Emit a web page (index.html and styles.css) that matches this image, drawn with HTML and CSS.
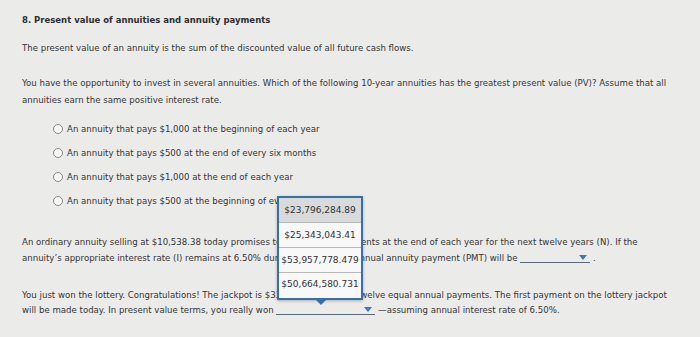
FILE: index.html
```html
<!DOCTYPE html>
<html>
<head>
<meta charset="utf-8">
<link rel="stylesheet" href="styles.css">
</head>
<body>
<div class="page">
  <h2 class="title">8. Present value of annuities and annuity payments</h2>
  <p class="p1">The present value of an annuity is the sum of the discounted value of all future cash flows.</p>
  <p class="p2">You have the opportunity to invest in several annuities. Which of the following 10-year annuities has the greatest present value (PV)? Assume that all annuities earn the same positive interest rate.</p>
  <ul class="options">
    <li class="opt"><span class="radio"></span>An annuity that pays $1,000 at the beginning of each year</li>
    <li class="opt"><span class="radio"></span>An annuity that pays $500 at the end of every six months</li>
    <li class="opt"><span class="radio"></span>An annuity that pays $1,000 at the end of each year</li>
    <li class="opt"><span class="radio"></span>An annuity that pays $500 at the beginning of every six months</li>
  </ul>
  <p class="p3">An ordinary annuity selling at $10,538.38 today promises to make equal payments at the end of each year for the next twelve years (N). If the annuity’s appropriate interest rate (I) remains at 6.50% during this time, the annual annuity payment (PMT) will be <span class="select sel1"><span class="arrow"></span></span> .</p>
  <p class="p4">You just won the lottery. Congratulations! The jackpot is $33,000,000, paid in twelve equal annual payments. The first payment on the lottery jackpot will be made today. In present value terms, you really won <span class="select sel2"><span class="arrow"></span></span> —assuming annual interest rate of 6.50%.</p>
  <div class="popup">
    <div class="item active">$23,796,284.89</div>
    <div class="item">$25,343,043.41</div>
    <div class="item">$53,957,778.479</div>
    <div class="item last">$50,664,580.731</div>
    <span class="pointer"></span>
  </div>
</div>
</body>
</html>
```
FILE: styles.css
```css
html, body {
  margin: 0;
  padding: 0;
}
body {
  background: #ebebea;
  font-family: "DejaVu Sans", Verdana, sans-serif;
  font-size: 8.6px;
  color: #353535;
  width: 700px;
  height: 337px;
  overflow: hidden;
}
.page {
  position: relative;
  width: 652px;
  padding: 13px 0 0 22px;
}
.title {
  margin: 0;
  font-size: 8.5px;
  font-weight: bold;
  line-height: 14px;
  color: #2e2e2e;
}
.p1 {
  margin: 14px 0 0 0;
  line-height: 14px;
}
.p2 {
  margin: 20px 0 0 0;
  line-height: 17px;
}
.options {
  list-style: none;
  margin: 8px 0 0 0;
  padding: 0 0 0 31px;
}
.opt {
  height: 24px;
  display: flex;
  align-items: center;
}
.radio {
  width: 8px;
  height: 8px;
  border: 1px solid #8a8a8a;
  border-radius: 50%;
  background: #f6f6f6;
  margin-right: 4px;
  flex: none;
}
.p3 {
  margin: 21px 0 0 0;
  line-height: 16px;
}
.p4 {
  margin: 22px 0 0 0;
  line-height: 15px;
}
.select {
  display: inline-block;
  position: relative;
  height: 10px;
  border-bottom: 1px solid #5a6a7a;
  vertical-align: -2px;
}
.sel1 { width: 70px; }
.sel2 { width: 99px; }
.arrow {
  position: absolute;
  right: 3px;
  top: 3px;
  width: 0;
  height: 0;
  border-left: 4px solid transparent;
  border-right: 4px solid transparent;
  border-top: 5px solid #3a78b8;
}
.popup {
  position: absolute;
  left: 277px;
  top: 196px;
  width: 82px;
  border: 2px solid #3570a8;
  background: #f8f8f8;
  box-shadow: 0 1px 3px rgba(0,0,0,0.25);
}
.item {
  height: 24px;
  line-height: 24px;
  font-size: 9px;
  text-align: center;
  border-bottom: 1px solid #b8b8b8;
  color: #333;
  white-space: nowrap;
}
.item.last { border-bottom: none; height: 25px; line-height: 23px; }
.item.active { background: #d9dadb; }
.pointer {
  position: absolute;
  left: 37px;
  bottom: -7px;
  width: 0;
  height: 0;
  border-left: 5px solid transparent;
  border-right: 5px solid transparent;
  border-top: 5px solid #3570a8;
}
```
